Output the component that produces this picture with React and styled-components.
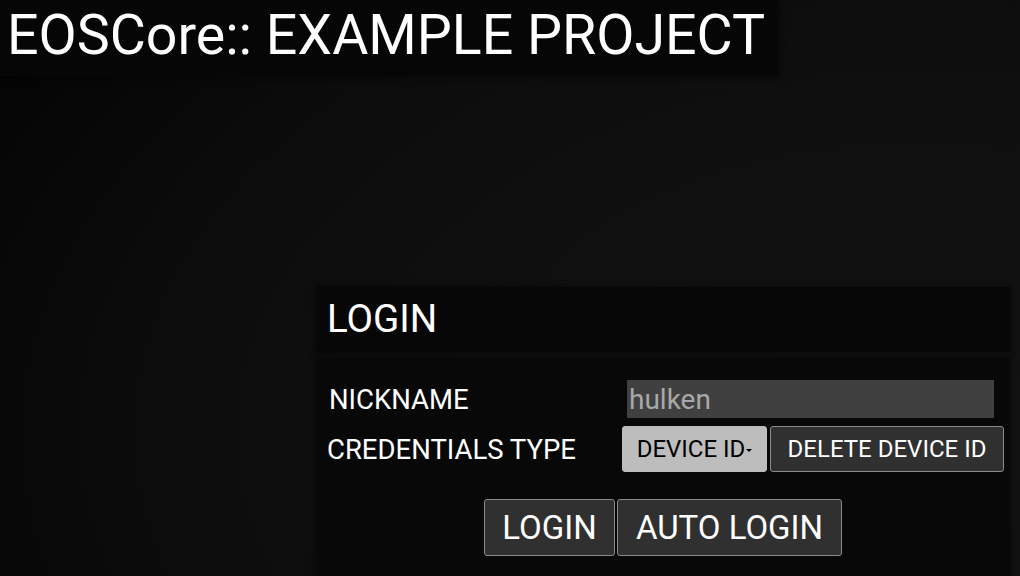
import React from "react";
import styled, { createGlobalStyle } from "styled-components";

const Global = createGlobalStyle`
  html, body { margin: 0; padding: 0; height: 100%; }
  body {
    background: #050505;
    font-family: Roboto, "Noto Sans", "Liberation Sans", sans-serif;
    color: #fff;
    overflow: hidden;
  }
`;

const Screen = styled.div`
  width: 1020px;
  height: 576px;
  overflow: hidden;
  background: radial-gradient(ellipse 1100px 700px at 90% 75%, #121212 0%, #101010 40%, #0c0c0c 70%, #040404 100%);
  display: flex;
  flex-direction: column;
  align-items: flex-start;
  & > * { flex-shrink: 0; }
`;

const TitleBar = styled.header`
  width: 778px;
  height: 76px;
  box-sizing: border-box;
  padding-left: 7px;
  display: flex;
  align-items: center;
  background: #060606;
  box-shadow: 0 0 6px 3px rgba(0, 0, 0, 0.35);
`;

const Title = styled.h1`
  margin: 0;
  font-family: Roboto, sans-serif;
  font-weight: 400;
  font-size: 55.5px;
  line-height: 1;
  margin-top: -5px;
  color: #fff;
  white-space: nowrap;
`;

const Panel = styled.section`
  margin-top: 211px;
  margin-left: 316px;
  width: 694px;
  display: flex;
  flex-direction: column;
  gap: 6px;
`;

const PanelHeader = styled.div`
  height: 65px;
  box-sizing: border-box;
  padding-left: 11px;
  display: flex;
  align-items: center;
  background: #070707;
  box-shadow: 0 0 5px 2px rgba(0, 0, 0, 0.3);
`;

const PanelTitle = styled.h2`
  margin: 0;
  font-weight: 400;
  font-size: 38.5px;
  line-height: 1;
  color: #fff;
`;

const PanelBody = styled.div`
  height: 230px;
  box-sizing: border-box;
  padding: 22px 6px 0 11px;
  background: #080808;
  box-shadow: 0 0 5px 2px rgba(0, 0, 0, 0.3);
  display: flex;
  flex-direction: column;
`;

const FormRow = styled.div`
  display: flex;
  align-items: center;
  height: ${(p) => p.$h}px;
  margin-bottom: ${(p) => p.$mb || 0}px;
`;

const Label = styled.span`
  width: 295px;
  padding-left: ${(p) => p.$indent || 0}px;
  box-sizing: border-box;
  font-size: 27.5px;
  color: #fff;
  white-space: nowrap;
`;

const TextInput = styled.input`
  margin-left: 5px;
  width: 367px;
  height: 38px;
  box-sizing: border-box;
  border: none;
  outline: none;
  background: #404040;
  color: #a8a8a8;
  font-family: Roboto, sans-serif;
  font-size: 28px;
  padding: 0 2px;
`;

const Button = styled.button`
  height: ${(p) => p.$h}px;
  box-sizing: border-box;
  padding: 0 ${(p) => p.$px}px;
  margin-right: ${(p) => p.$mr || 0}px;
  border-radius: 3px;
  border: 1px solid ${(p) => (p.$light ? "#bdbdbd" : "#8a8a8a")};
  background: ${(p) => (p.$light ? "#bdbdbd" : "#303030")};
  color: ${(p) => (p.$light ? "#000" : "#fff")};
  font-family: Roboto, sans-serif;
  font-size: ${(p) => p.$fs}px;
  display: inline-flex;
  align-items: center;
  justify-content: center;
  white-space: nowrap;
  cursor: pointer;
`;

const Caret = styled.span`
  display: inline-block;
  width: 0;
  height: 0;
  margin-left: 1px;
  border-left: 3px solid transparent;
  border-right: 3px solid transparent;
  border-top: 3px solid #000;
  margin-top: 2px;
`;

const Actions = styled.div`
  margin-top: 27px;
  margin-left: -11px;
  margin-right: -6px;
  display: flex;
  justify-content: center;
`;

export default function App() {
  return (
    <>
      <Global />
      <Screen>
        <TitleBar>
          <Title>EOSCore:: EXAMPLE PROJECT</Title>
        </TitleBar>
        <Panel>
          <PanelHeader>
            <PanelTitle>LOGIN</PanelTitle>
          </PanelHeader>
          <PanelBody>
            <FormRow $h={38} $mb={8}>
              <Label $indent={2}>NICKNAME</Label>
              <TextInput defaultValue="hulken" />
            </FormRow>
            <FormRow $h={46}>
              <Label>CREDENTIALS TYPE</Label>
              <Button $light $h={46} $px={13} $mr={3} $fs={24} style={{ width: 145 }}>
                DEVICE ID<Caret />
              </Button>
              <Button $h={46} $px={18} $fs={24} style={{ width: 234 }}>
                DELETE DEVICE ID
              </Button>
            </FormRow>
            <Actions>
              <Button $h={57} $px={18} $mr={2} $fs={33} style={{ width: 131 }}>
                LOGIN
              </Button>
              <Button $h={57} $px={18} $fs={33} style={{ width: 225 }}>
                AUTO LOGIN
              </Button>
            </Actions>
          </PanelBody>
        </Panel>
      </Screen>
    </>
  );
}
